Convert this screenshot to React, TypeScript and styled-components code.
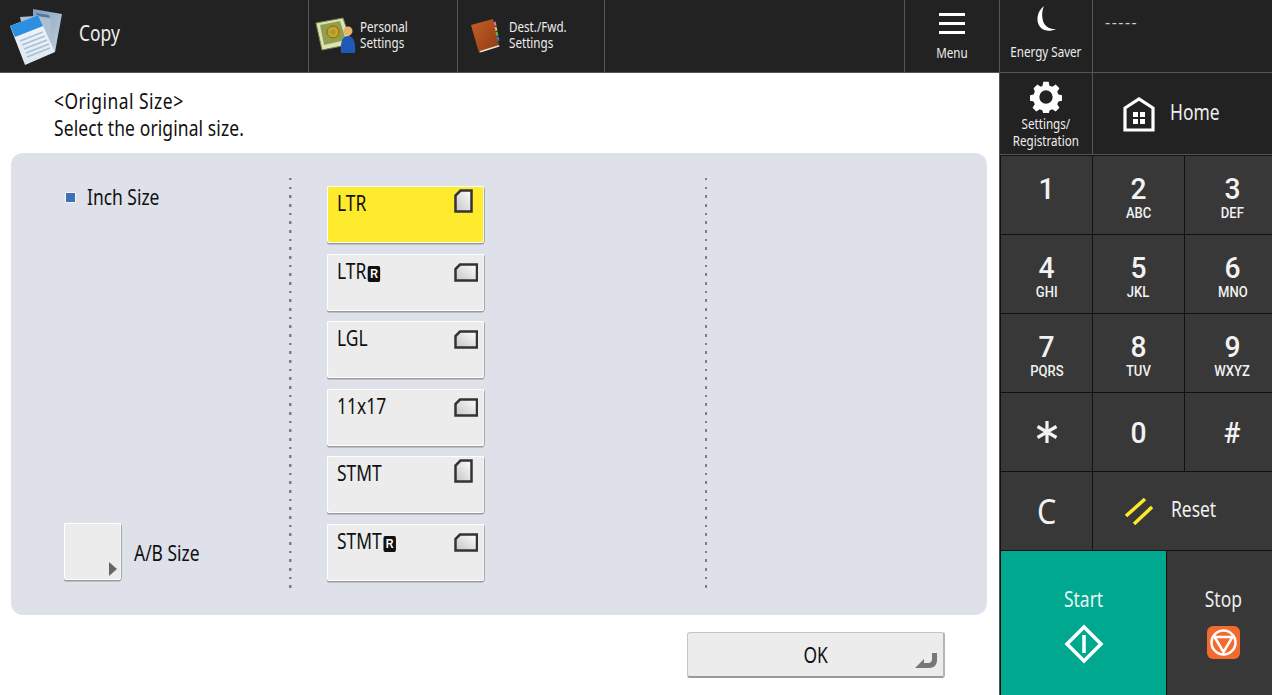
import * as React from "react";
import styled, { createGlobalStyle } from "styled-components";

const GlobalStyle = createGlobalStyle`
  html, body {
    margin: 0;
    padding: 0;
    background: #fff;
    overflow: hidden;
  }
  body {
    font-family: "Noto Sans", "Liberation Sans", sans-serif;
  }
`;

// the panel font is condensed, none of the installed ones is
const Narrow = styled.span<{ $center?: boolean }>`
  display: inline-block;
  white-space: nowrap;
  transform: scaleX(0.83);
  transform-origin: ${(p) => (p.$center ? "center" : "left")} center;
`;

const Screen = styled.div`
  width: 1272px;
  height: 695px;
  display: grid;
  grid-template-columns: 999px 273px;
  overflow: hidden;
`;

const MainColumn = styled.div`
  display: flex;
  flex-direction: column;
  background: #fff;
`;

const Header = styled.header`
  height: 72px;
  background: #222;
  border-bottom: 1px solid #555;
  display: grid;
  grid-template-columns: 309px 149px 147px 300px 94px;
`;

const HeaderCell = styled.div<{ $last?: boolean }>`
  display: flex;
  align-items: center;
  color: #eee;
  border-right: ${(p) => (p.$last ? "none" : "1px solid #555")};
`;

const CopyCell = styled(HeaderCell)`
  padding-left: 8px;
  gap: 13px;
  font-size: 21px;
  span {
    margin-top: -6px;
  }
`;

const ShortcutCell = styled(HeaderCell)`
  padding-left: 5px;
  gap: 2px;
  font-size: 14px;
  line-height: 16.5px;
  span {
    margin-top: -2px;
  }
`;

const MenuCell = styled(HeaderCell)`
  flex-direction: column;
  justify-content: flex-start;
  padding-top: 13px;
  font-size: 14px;
`;

const MenuBars = styled.div`
  width: 26px;
  height: 21px;
  margin-bottom: 9px;
  border-top: 3px solid #fff;
  border-bottom: 3px solid #fff;
  box-sizing: border-box;
  position: relative;
  &::after {
    content: "";
    position: absolute;
    left: 0;
    right: 0;
    top: 6px;
    height: 3px;
    background: #fff;
  }
`;

const Prompt = styled.div`
  height: 80px;
  box-sizing: border-box;
  padding: 15px 0 0 54px;
  font-size: 21px;
  line-height: 27px;
  color: #111;
`;

const PromptTitle = styled.span`
  letter-spacing: 0.6px;
`;

const PromptText = styled.span`
  letter-spacing: 0.15px;
`;

const Panel = styled.section`
  margin-left: 11px;
  width: 976px;
  height: 462px;
  box-sizing: border-box;
  background: #dee1ea;
  border-radius: 12px;
  padding: 25px 0 23px;
  display: grid;
  grid-template-columns: 278px 418px 1fr;
`;

const SizeTypes = styled.div`
  display: flex;
  flex-direction: column;
  justify-content: space-between;
  padding-left: 53px;
  padding-bottom: 13px;
`;

const InchSize = styled.div`
  display: flex;
  align-items: center;
  gap: 11px;
  padding-left: 1px;
  font-size: 21px;
  color: #111;
  height: 38px;
`;

const Bullet = styled.span`
  width: 11px;
  height: 11px;
  box-sizing: border-box;
  background: #3f6fb5;
  border: 1px solid #f4f6fb;
`;

const OtherSize = styled.div`
  display: flex;
  align-items: center;
  gap: 13px;
  font-size: 21px;
  color: #111;
  span {
    margin-top: 3px;
  }
`;

const raised = `
  border: none;
  border-radius: 2px;
  box-shadow: inset 0 1px 0 #fff, inset 1px 0 0 #fff, inset -1px 0 0 #f6f6f6, 0 1px 0 #fff, 0 2.500px 0 #9a9a9f, 1px 1px 0 #a8a8ac;
`;

const ArrowButton = styled.div`
  ${raised}
  width: 57px;
  height: 56px;
  background: #ececec;
  position: relative;
  &::after {
    content: "";
    position: absolute;
    right: 4px;
    bottom: 3px;
    border-left: 8px solid #666;
    border-top: 7px solid transparent;
    border-bottom: 7px solid transparent;
  }
`;

const SizeList = styled.div`
  background-image: repeating-linear-gradient(to bottom, #7a7f8e 0 2.5px, transparent 2.5px 8.67px),
    repeating-linear-gradient(to bottom, #7a7f8e 0 2.5px, transparent 2.5px 8.67px);
  background-size: 2.5px 100%;
  background-position: left top, right top;
  background-repeat: no-repeat;
  padding: 8px 0 0 38px;
  display: flex;
  flex-direction: column;
  gap: 11.5px;
`;

const SizeButton = styled.div<{ $selected?: boolean }>`
  ${raised}
  width: 157px;
  height: 56px;
  box-sizing: border-box;
  background: ${(p) => (p.$selected ? "#ffeb2d" : "#ececec")};
  padding: 3px 6px 0 10px;
  display: flex;
  justify-content: space-between;
  font-size: 21px;
  color: #111;
`;

const RotatedMark = styled.span`
  display: inline-block;
  width: 15px;
  height: 16px;
  margin-left: 2px;
  border-radius: 2px;
  background: #111;
  color: #fff;
  font-family: "Liberation Sans", sans-serif;
  font-size: 13px;
  font-weight: bold;
  line-height: 16px;
  text-align: center;
  vertical-align: 1px;
`;

const Footer = styled.div`
  display: flex;
  justify-content: flex-end;
  padding: 17px 54px 0 0;
`;

const OkButton = styled.div`
  width: 258px;
  height: 46px;
  box-sizing: border-box;
  background: #ececec;
  border: 1px solid #c4c4c4;
  border-bottom: 2px solid #9a9a9a;
  border-right: 2px solid #b5b5b5;
  border-radius: 3px;
  font-size: 21px;
  color: #111;
  display: flex;
  align-items: center;
  justify-content: center;
  position: relative;
`;

const ReturnIcon = styled.svg`
  position: absolute;
  right: 5px;
  bottom: 6px;
`;

const SidePanel = styled.aside`
  background: #222;
  border-left: 1px solid #555;
  box-sizing: border-box;
  display: flex;
  flex-direction: column;
  color: #eee;
`;

const SideRow = styled.div<{ $height: number }>`
  height: ${(p) => p.$height}px;
  box-sizing: border-box;
  border-bottom: 1px solid #555;
  display: grid;
  grid-template-columns: 93px 1fr;
`;

const SideCell = styled.div<{ $top: number }>`
  border-right: 1px solid #555;
  display: flex;
  flex-direction: column;
  align-items: center;
  padding-top: ${(p) => p.$top}px;
  font-size: 14px;
  line-height: 17px;
  text-align: center;
`;

const SaverLabel = styled(Narrow)`
  margin-top: 10px;
`;

const SettingsLabel = styled(Narrow)`
  margin-top: 2px;
`;

const StatusCell = styled.div`
  padding: 11px 0 0 12px;
  font-size: 16px;
  color: #ccc;
  letter-spacing: 1.5px;
`;

const HomeCell = styled.div`
  display: flex;
  align-items: center;
  gap: 15px;
  padding-left: 30px;
  font-size: 21px;
  span {
    margin-top: -3px;
  }
`;

const Keypad = styled.div`
  flex: 1;
  width: 287px;
  background: #111;
  display: grid;
  grid-template-columns: 91px 91px 95px;
  grid-template-rows: repeat(5, 78px) 1fr;
  gap: 1px;
  padding: 1px 0 0 1px;
`;

const Key = styled.div<{ $span?: number; $centered?: boolean }>`
  background: #383838;
  grid-column: span ${(p) => p.$span ?? 1};
  display: flex;
  flex-direction: column;
  align-items: center;
  justify-content: ${(p) => (p.$centered ? "center" : "flex-start")};
  padding-top: ${(p) => (p.$centered ? 0 : 15)}px;
  box-sizing: border-box;
  color: #f2f2f2;
`;

const Digit = styled.span`
  font-family: Roboto, "Noto Sans", sans-serif;
  font-size: 30px;
  line-height: 35px;
  font-weight: 500;
  transform: scaleX(0.94);
`;

const ClearGlyph = styled.span`
  font-size: 34px;
  line-height: 38px;
  font-weight: 400;
  transform: scaleX(0.9);
`;

const Letters = styled.span`
  font-family: Roboto, "Noto Sans", sans-serif;
  font-size: 14px;
  line-height: 16px;
  font-weight: 500;
  margin-top: -1px;
  transform: scaleX(0.93);
`;

const ResetKey = styled(Key)`
  flex-direction: row;
  justify-content: flex-start;
  gap: 18px;
  padding: 0 0 0 32px;
  font-size: 21px;
  span {
    margin-top: -4px;
  }
`;

const ActionRow = styled.div`
  grid-column: span 3;
  display: grid;
  grid-template-columns: 165px 1fr;
  gap: 1px;
`;

const StartKey = styled.div`
  background: #00a88f;
  color: #e8f7f3;
  display: flex;
  flex-direction: column;
  align-items: center;
  gap: 11px;
  padding-top: 34px;
  font-size: 21px;
  line-height: 28px;
`;

const StopKey = styled(StartKey)`
  background: #383838;
  color: #eee;
  gap: 13px;
`;

const CopyIcon = () => (
  <svg width="58" height="60" viewBox="8 4 58 60">
    <defs>
      <linearGradient id="copyBack" x1="0" y1="0" x2="1" y2="1">
        <stop offset="0" stopColor="#7f9cbc" />
        <stop offset="1" stopColor="#c4d2de" />
      </linearGradient>
      <linearGradient id="copyFront" x1="0" y1="0" x2="0" y2="1">
        <stop offset="0" stopColor="#f4f8fc" />
        <stop offset="1" stopColor="#dde6ef" />
      </linearGradient>
    </defs>
    <path d="M33 7l29 5-7 38-22-4z" fill="url(#copyBack)" />
    <path d="M20 15l30-2 3 37-25 2z" fill="#aebfd0" />
    <path d="M36 11l13 2 1 3-13-2z" fill="#54799f" />
    <path d="M10 24l28-11 17 37-30 13z" fill="url(#copyFront)" />
    <path d="M10 24l28-11 5 11-28 11z" fill="#2d8fe0" />
    <path d="M20 39l23-9M22 43l23-9M24 47l23-9M26 51l23-9M27 55l23-9" stroke="#a9c0d4" strokeWidth="1.5" />
  </svg>
);

const SettingsPicture = () => (
  <svg width="44" height="40" viewBox="314 16 44 40">
    <path d="M316 23l27-5 9 26-30 6z" fill="#dfe3b0" stroke="#78824e" strokeWidth="1" />
    <path d="M320 25l20-4 6 19-22 5z" fill="#8f9f52" />
    <circle cx="333" cy="32" r="6" fill="#d4a019" stroke="#8a6a12" strokeWidth="1" />
    <circle cx="333" cy="32" r="2.5" fill="#8f9f52" />
    <circle cx="348" cy="31" r="4.500" fill="#e6b468" />
    <path d="M341 53c-1-12 2-17 7-17s8 5 7 17z" fill="#2058b6" />
  </svg>
);

const BookIcon = () => (
  <svg width="44" height="40" viewBox="463 16 44 40">
    <defs>
      <linearGradient id="bookCover" x1="0" y1="0" x2="1" y2="1">
        <stop offset="0" stopColor="#c85f28" />
        <stop offset="1" stopColor="#8b3a14" />
      </linearGradient>
    </defs>
    <path d="M471 25l22-6 6 26-20 8z" fill="url(#bookCover)" />
    <path d="M480 51l19-6 .5 1.500-19 6z" fill="#ece3d2" />
    <path d="M493.500 22l2-.5 1 4-2 .5z" fill="#d979b0" />
    <path d="M494.500 27l2-.5 1 4-2 .5z" fill="#e0c24a" />
    <path d="M495.500 32l2-.5 1 4-2 .5z" fill="#6fb04a" />
    <path d="M496.500 37l2-.5 1 4-2 .5z" fill="#3c7fc0" />
  </svg>
);

const MoonIcon = () => (
  <svg width="24" height="28" viewBox="0 0 24 28">
    <path d="M10 1C3 6 1 17 7 23c4 3.500 10 3.500 15 1-6 .5-11-2-13-8-1.500-5-1-11 1-15z" fill="#fff" />
  </svg>
);

const GearIcon = () => (
  <svg width="32" height="32" viewBox="0 0 24 24">
    <path
      fill="#fff"
      fillRule="evenodd"
      d="M10 1h4l.6 3 2.100.9 2.600-1.700 2.800 2.800-1.700 2.600.9 2.100 3 .6v4l-3 .6-.9 2.100 1.700 2.600-2.800 2.800-2.600-1.700-2.100.9-.6 3h-4l-.6-3-2.100-.9-2.600 1.700-2.800-2.800 1.700-2.600-.9-2.100-3-.6v-4l3-.6.9-2.100L2.700 6l2.800-2.800 2.600 1.700L9.400 4zM12 7.500a5 5 0 1 0 0 10 5 5 0 0 0 0-10z"
      transform="translate(0 -.5)"
    />
  </svg>
);

const HomeIcon = () => (
  <svg width="32" height="36" viewBox="0 0 32 36">
    <path d="M2 12L16 3l14 9v22H2z" fill="none" stroke="#fff" strokeWidth="3.200" />
    <path d="M10 16h5v5h-5zM17 16h5v5h-5zM10 23h5v5h-5zM17 23h5v5h-5z" fill="#fff" />
  </svg>
);

const AsteriskIcon = () => (
  <svg width="24" height="24" viewBox="0 0 24 24">
    <path d="M12 1v22M2.500 6.500l19 11M21.500 6.500l-19 11" stroke="#f2f2f2" strokeWidth="3.200" />
  </svg>
);

const ResetIcon = () => (
  <svg width="28" height="28" viewBox="0 0 28 28">
    <path d="M1 19L20 2M9 27L27 10" stroke="#fbe92b" strokeWidth="3.500" />
  </svg>
);

const StartIcon = () => (
  <svg width="40" height="40" viewBox="0 0 40 40">
    <path d="M20 3l17 17-17 17L3 20z" fill="none" stroke="#fff" strokeWidth="3.500" />
    <path d="M20 11v18" stroke="#fff" strokeWidth="3.500" />
  </svg>
);

const StopIcon = () => (
  <svg width="33" height="33" viewBox="0 0 33 33">
    <rect width="33" height="33" rx="6" fill="#f26a2e" />
    <circle cx="16.500" cy="16.500" r="12" fill="none" stroke="#fff" strokeWidth="2.500" />
    <path d="M7.500 11h18l-9 15z" fill="none" stroke="#fff" strokeWidth="2.500" />
  </svg>
);

const PaperIcon = ({ wide }: { wide?: boolean }) => (
  <svg width="24" height="26" viewBox="0 0 24 26">
    <defs>
      <linearGradient id="sheet" x1="0" y1="1" x2="1" y2="0">
        <stop offset="0" stopColor="#c4c4c4" />
        <stop offset="1" stopColor="#fff" />
      </linearGradient>
    </defs>
    {wide ? (
      <path d="M6 7.500h17v16H1.500V12z" fill="url(#sheet)" stroke="#333" strokeWidth="2.500" />
    ) : (
      <path d="M6.500 1.500h11v21H1.500v-16z" fill="url(#sheet)" stroke="#333" strokeWidth="2.500" />
    )}
  </svg>
);

const sizes = [
  { label: "LTR", selected: true },
  { label: "LTR", rotated: true, wide: true },
  { label: "LGL", wide: true },
  { label: "11x17", wide: true },
  { label: "STMT" },
  { label: "STMT", rotated: true, wide: true },
];

const keys = [
  ["1", ""],
  ["2", "ABC"],
  ["3", "DEF"],
  ["4", "GHI"],
  ["5", "JKL"],
  ["6", "MNO"],
  ["7", "PQRS"],
  ["8", "TUV"],
  ["9", "WXYZ"],
];

const App: React.FC = () => {
  return (
    <Screen>
      <GlobalStyle />
      <MainColumn>
        <Header>
          <CopyCell>
            <CopyIcon />
            <Narrow>Copy</Narrow>
          </CopyCell>
          <ShortcutCell>
            <SettingsPicture />
            <Narrow>
              Personal
              <br />
              Settings
            </Narrow>
          </ShortcutCell>
          <ShortcutCell>
            <BookIcon />
            <Narrow>
              Dest./Fwd.
              <br />
              Settings
            </Narrow>
          </ShortcutCell>
          <HeaderCell />
          <MenuCell $last>
            <MenuBars />
            <Narrow $center>Menu</Narrow>
          </MenuCell>
        </Header>
        <Prompt>
          <Narrow>
            <PromptTitle>&lt;Original Size&gt;</PromptTitle>
            <br />
            <PromptText>Select the original size.</PromptText>
          </Narrow>
        </Prompt>
        <Panel>
          <SizeTypes>
            <InchSize>
              <Bullet />
              <Narrow>Inch Size</Narrow>
            </InchSize>
            <OtherSize>
              <ArrowButton />
              <Narrow>A/B Size</Narrow>
            </OtherSize>
          </SizeTypes>
          <SizeList>
            {sizes.map((size, i) => (
              <SizeButton key={i} $selected={size.selected}>
                <Narrow>
                  {size.label}
                  {size.rotated && <RotatedMark>R</RotatedMark>}
                </Narrow>
                <PaperIcon wide={size.wide} />
              </SizeButton>
            ))}
          </SizeList>
        </Panel>
        <Footer>
          <OkButton>
            <Narrow $center>OK</Narrow>
            <ReturnIcon width="24" height="18" viewBox="915 653 24 18">
              <path d="M933 654h5v7c0 5-3 8-8 8h-14l9-9v4h4c3 0 4-2 4-4z" fill="#777" />
            </ReturnIcon>
          </OkButton>
        </Footer>
      </MainColumn>
      <SidePanel>
        <SideRow $height={73}>
          <SideCell $top={5}>
            <MoonIcon />
            <SaverLabel $center>Energy Saver</SaverLabel>
          </SideCell>
          <StatusCell>-----</StatusCell>
        </SideRow>
        <SideRow $height={82}>
          <SideCell $top={8}>
            <GearIcon />
            <SettingsLabel $center>
              Settings/
              <br />
              Registration
            </SettingsLabel>
          </SideCell>
          <HomeCell>
            <HomeIcon />
            <Narrow>Home</Narrow>
          </HomeCell>
        </SideRow>
        <Keypad>
          {keys.map(([digit, letters]) => (
            <Key key={digit}>
              <Digit>{digit}</Digit>
              {letters && <Letters>{letters}</Letters>}
            </Key>
          ))}
          <Key $centered>
            <AsteriskIcon />
          </Key>
          <Key $centered>
            <Digit>0</Digit>
          </Key>
          <Key $centered>
            <Digit>#</Digit>
          </Key>
          <Key $centered>
            <ClearGlyph>C</ClearGlyph>
          </Key>
          <ResetKey $span={2} $centered>
            <ResetIcon />
            <Narrow>Reset</Narrow>
          </ResetKey>
          <ActionRow>
            <StartKey>
              <Narrow $center>Start</Narrow>
              <StartIcon />
            </StartKey>
            <StopKey>
              <Narrow $center>Stop</Narrow>
              <StopIcon />
            </StopKey>
          </ActionRow>
        </Keypad>
      </SidePanel>
    </Screen>
  );
};

export default App;
